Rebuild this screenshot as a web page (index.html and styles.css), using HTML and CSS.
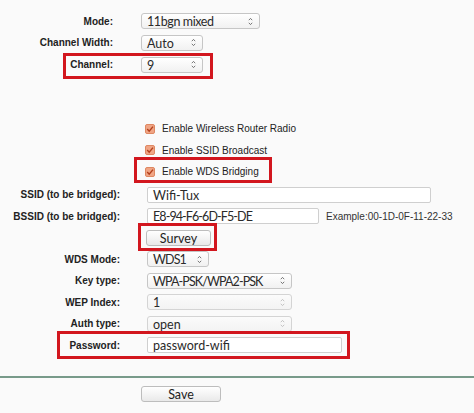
FILE: index.html
```html
<!DOCTYPE html>
<html>
<head>
<meta charset="utf-8">
<link rel="stylesheet" href="styles.css">
</head>
<body>
<div class="page">
  <section class="top">
    <div class="row">
      <span class="lbl lbl-top">Mode:</span>
      <div class="sel w-mode"><span class="val tight">11bgn mixed</span><svg class="arr" viewBox="0 0 5 9"><path d="M0.8 3.2 L2.5 1.4 L4.2 3.2 M0.8 5.8 L2.5 7.6 L4.2 5.8"/></svg></div>
    </div>
    <div class="row">
      <span class="lbl lbl-top">Channel Width:</span>
      <div class="sel w-small"><span class="val">Auto</span><svg class="arr" viewBox="0 0 5 9"><path d="M0.8 3.2 L2.5 1.4 L4.2 3.2 M0.8 5.8 L2.5 7.6 L4.2 5.8"/></svg></div>
    </div>
    <div class="row row-ch hl hl-channel">
      <span class="lbl lbl-top">Channel:</span>
      <div class="sel w-small"><span class="val">9</span><svg class="arr" viewBox="0 0 5 9"><path d="M0.8 3.2 L2.5 1.4 L4.2 3.2 M0.8 5.8 L2.5 7.6 L4.2 5.8"/></svg></div>
    </div>
  </section>

  <section class="checks">
    <div class="crow"><svg class="cb" viewBox="0 0 10 10"><rect x="0.5" y="0.5" width="9" height="9" rx="1.5"/><path d="M2.2 5 L4.2 7.2 L8 2.6"/></svg><span>Enable Wireless Router Radio</span></div>
    <div class="crow"><svg class="cb" viewBox="0 0 10 10"><rect x="0.5" y="0.5" width="9" height="9" rx="1.5"/><path d="M2.2 5 L4.2 7.2 L8 2.6"/></svg><span>Enable SSID Broadcast</span></div>
    <div class="crow hl hl-wds"><svg class="cb" viewBox="0 0 10 10"><rect x="0.5" y="0.5" width="9" height="9" rx="1.5"/><path d="M2.2 5 L4.2 7.2 L8 2.6"/></svg><span>Enable WDS Bridging</span></div>
  </section>

  <section class="bottom">
    <div class="row">
      <span class="lbl lbl-bot">SSID (to be bridged):</span>
      <div class="inp w-ssid"><span class="val">Wifi-Tux</span></div>
    </div>
    <div class="row">
      <span class="lbl lbl-bot">BSSID (to be bridged):</span>
      <div class="inp w-bssid"><span class="val caps">E8-94-F6-6D-F5-DE</span></div>
      <span class="hint">Example:00-1D-0F-11-22-33</span>
    </div>
    <div class="row hl hl-survey">
      <span class="lbl lbl-bot"></span>
      <button class="btn btn-survey">Survey</button>
    </div>
    <div class="row">
      <span class="lbl lbl-bot">WDS Mode:</span>
      <div class="sel w-small"><span class="val caps">WDS1</span><svg class="arr" viewBox="0 0 5 9"><path d="M0.8 3.2 L2.5 1.4 L4.2 3.2 M0.8 5.8 L2.5 7.6 L4.2 5.8"/></svg></div>
    </div>
    <div class="row">
      <span class="lbl lbl-bot">Key type:</span>
      <div class="sel w-key"><span class="val caps">WPA-PSK/WPA2-PSK</span><svg class="arr" viewBox="0 0 5 9"><path d="M0.8 3.2 L2.5 1.4 L4.2 3.2 M0.8 5.8 L2.5 7.6 L4.2 5.8"/></svg></div>
    </div>
    <div class="row">
      <span class="lbl lbl-bot">WEP Index:</span>
      <div class="sel w-key disabled"><span class="val">1</span><svg class="arr" viewBox="0 0 5 9"><path d="M0.8 3.2 L2.5 1.4 L4.2 3.2 M0.8 5.8 L2.5 7.6 L4.2 5.8"/></svg></div>
    </div>
    <div class="row">
      <span class="lbl lbl-bot">Auth type:</span>
      <div class="sel w-key disabled"><span class="val">open</span><svg class="arr" viewBox="0 0 5 9"><path d="M0.8 3.2 L2.5 1.4 L4.2 3.2 M0.8 5.8 L2.5 7.6 L4.2 5.8"/></svg></div>
    </div>
    <div class="row hl hl-password">
      <span class="lbl lbl-bot">Password:</span>
      <div class="inp w-pass"><span class="val">password-wifi</span></div>
    </div>
  </section>

  <div class="divider"></div>

  <div class="footer">
    <button class="btn btn-save">Save</button>
  </div>
</div>
</body>
</html>
```

FILE: styles.css
```css
html, body {
  margin: 0;
  padding: 0;
  background: #fafafa;
}

.page {
  width: 474px;
  height: 413px;
  overflow: hidden;
  font-family: "Liberation Sans", Arial, sans-serif;
  color: #222;
  display: flex;
  flex-direction: column;
}

.top {
  display: flex;
  flex-direction: column;
  gap: 5.5px;
  padding-top: 13px;
}

.row {
  display: flex;
  align-items: center;
  height: 16px;
}

.lbl {
  font-weight: bold;
  font-size: 10px;
  text-align: right;
  flex: none;
  white-space: nowrap;
}

.lbl-top {
  width: 113px;
  margin-right: 28px;
}

.lbl-bot {
  width: 120px;
  margin-right: 27px;
}

.sel, .inp {
  box-sizing: border-box;
  height: 16px;
  border: 1px solid #c6c6c6;
  border-radius: 3px;
  background: linear-gradient(#ffffff, #f1f1f1);
  display: flex;
  align-items: center;
  justify-content: space-between;
  padding: 0 6px 0 5px;
  font-family: Lato, "Open Sans", sans-serif;
  font-size: 12.5px;
  color: #2a2a2a;
  flex: none;
}

.inp {
  background: #fff;
  border-color: #cfcfcf;
  border-radius: 2px;
}

.val {
  line-height: 16px;
  padding-top: 2px;
  white-space: nowrap;
}

.caps {
  letter-spacing: -0.9px;
}

.tight {
  letter-spacing: -0.4px;
}

.arr {
  width: 5px;
  height: 9px;
  flex: none;
}

.arr path {
  fill: none;
  stroke: #666;
  stroke-width: 0.9;
}

.disabled .arr path {
  stroke: #bdbdbd;
}

.disabled {
  background: linear-gradient(#fbfbfb, #f3f3f3);
  border-color: #d4d4d4;
}

.w-mode { width: 119px; }
.w-small { width: 62px; }
.w-key { width: 145px; }
.w-ssid { width: 284px; }
.w-bssid { width: 172px; }
.w-pass { width: 195px; }

.row-ch {
  margin-top: 0.5px;
}

.checks {
  display: flex;
  flex-direction: column;
  gap: 5.5px;
  margin-top: 48px;
}

.crow {
  display: flex;
  align-items: center;
  height: 16px;
  padding-left: 145px;
  font-size: 10px;
  color: #222;
}

.cb {
  width: 10px;
  height: 10px;
  margin-right: 7px;
  flex: none;
}

.cb rect {
  fill: #f0a585;
  stroke: #de8862;
  stroke-width: 1;
}

.cb path {
  fill: none;
  stroke: #b2401c;
  stroke-width: 1.4;
}

.bottom {
  display: flex;
  flex-direction: column;
  gap: 5.5px;
  margin-top: 7px;
}

.hint {
  font-size: 10px;
  color: #333;
  margin-left: 7px;
  white-space: nowrap;
}

.btn {
  box-sizing: border-box;
  height: 16px;
  border: 1px solid #bdbdbd;
  border-radius: 3px;
  background: linear-gradient(#ffffff, #e9e9e9);
  font-family: Lato, "Open Sans", sans-serif;
  font-size: 12.5px;
  color: #222;
  padding: 1px 0 0 0;
  line-height: 13px;
  flex: none;
}

.btn-survey {
  width: 65px;
  margin-left: -1px;
}

.divider {
  height: 2px;
  background: #789a8a;
  margin-top: 23px;
  flex: none;
}

.footer {
  padding-top: 7px;
  padding-left: 141px;
}

.btn-save {
  width: 80px;
}

/* red annotation boxes drawn over the form */
.hl {
  position: relative;
}

.hl::after {
  content: "";
  position: absolute;
  border: 3px solid #d2161e;
  pointer-events: none;
}

.hl-channel::after {
  left: 63px;
  width: 144px;
  top: -4px;
  height: 20px;
}

.hl-wds::after {
  left: 134px;
  width: 132px;
  top: -7px;
  height: 20px;
}

.hl-survey::after {
  left: 138px;
  width: 73px;
  top: -7px;
  height: 22px;
}

.hl-password::after {
  left: 57px;
  width: 287px;
  top: -6.5px;
  height: 22px;
}
```
